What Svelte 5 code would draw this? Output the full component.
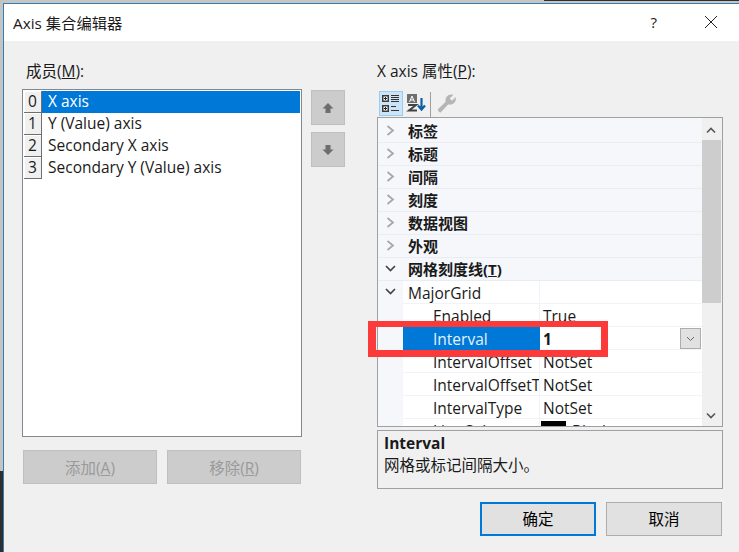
<script>
  const members = ['X axis', 'Y (Value) axis', 'Secondary X axis', 'Secondary Y (Value) axis'];
  const categories = ['标签', '标题', '间隔', '刻度', '数据视图', '外观'];
  const rows = [
    { name: 'Enabled', value: 'True' },
    { name: 'Interval', value: '1', selected: true },
    { name: 'IntervalOffset', value: 'NotSet' },
    { name: 'IntervalOffsetType', value: 'NotSet' },
    { name: 'IntervalType', value: 'NotSet' },
    { name: 'LineColor', value: 'Black', swatch: true }
  ];
</script>

<div class="screen">
  <div class="dialog">
    <header class="titlebar">
      <span class="title">Axis 集合编辑器</span>
      <span class="help">?</span>
      <svg class="close" width="14" height="14" viewBox="0 0 14 14"><path d="M1 1L13 13M13 1L1 13" stroke="#222" fill="none" /></svg>
    </header>

    <div class="body">
      <section class="left">
        <div class="label">成员(<u>M</u>):</div>
        <div class="list-row">
          <div class="list">
            {#each members as m, i}
              <div class="member">
                <span class="index">{i}</span>
                <span class="member-name" class:active={i === 0}>{m}</span>
              </div>
            {/each}
          </div>
          <div class="arrows">
            <button class="arrow" aria-label="up">
              <svg width="12" height="12" viewBox="0 0 12 12"><path d="M6 1L11.500 6.500H8.500V11H3.500V6.500H.5Z" fill="#6d6d6d" /></svg>
            </button>
            <button class="arrow" aria-label="down">
              <svg width="12" height="12" viewBox="0 0 12 12"><path d="M6 11L11.500 5.500H8.500V1H3.500V5.500H.5Z" fill="#6d6d6d" /></svg>
            </button>
          </div>
        </div>
        <div class="list-buttons">
          <button class="btn disabled">添加(<u>A</u>)</button>
          <button class="btn disabled">移除(<u>R</u>)</button>
        </div>
      </section>

      <section class="right">
        <div class="label">X axis 属性(<u>P</u>):</div>
        <div class="toolbar">
          <span class="tool on">
            <svg width="20" height="20" viewBox="0 0 20 20">
              <path d="M1 2h7v7H1zM1 12h7v7H1z" fill="#3c3c3c" />
              <path d="M2.500 3.500h4v4h-4zM2.500 13.500h4v4h-4z" fill="#fff" />
              <path d="M3 5.500h3M4.500 4v3M3 15.500h3M4.500 14v3" stroke="#222" fill="none" />
              <path d="M10 2.500h8M10 4.500h8M10 6.500h8M10 8.500h8M10 13.500h5M10 17.500h8" stroke="#333" stroke-width="1.200" fill="none" />
            </svg>
          </span>
          <span class="tool">
            <svg width="20" height="20" viewBox="0 0 20 20">
              <path d="M1 1h10v9H1z" fill="#6f6f6f" />
              <path d="M3.500 9L6 3L8.500 9M4.500 7h3" stroke="#fff" fill="none" />
              <path d="M2 12h8L3 17.500h8" stroke="#444" stroke-width="2" fill="none" />
              <path d="M15.500 5v11M12 12.500l3.500 4 3.500-4" stroke="#0e5fa8" stroke-width="2.200" fill="none" />
            </svg>
          </span>
          <span class="tool-sep"></span>
          <span class="tool">
            <svg width="20" height="20" viewBox="0 0 22 22">
              <path d="M1 18L9.500 9.500C8.500 5 12.500 0.500 18 2L14 6L16.500 8.500L20.500 4.500C22 10 17 14 12.500 12.500L4 21.500C3 22 .5 19.500 1 18Z" fill="#b5b5b5" />
            </svg>
          </span>
        </div>

        <div class="grid">
          <div class="grid-scroll">
            {#each categories as c}
              <div class="cat">
                <svg class="chev" width="9" height="11" viewBox="0 0 9 11"><path d="M1.500 1L7 5.500L1.500 10" stroke="#a6a6a6" stroke-width="1.700" fill="none" /></svg>
                <span class="cat-name">{c}</span>
              </div>
            {/each}
            <div class="cat">
              <svg class="chev open" width="11" height="9" viewBox="0 0 11 9"><path d="M1 2L5.500 6.500L10 2" stroke="#444" stroke-width="1.700" fill="none" /></svg>
              <span class="cat-name">网格刻度线(<u>T</u>)</span>
            </div>
            <div class="prop">
              <span class="gutter">
                <svg class="chev open" width="11" height="9" viewBox="0 0 11 9"><path d="M1 2L5.500 6.500L10 2" stroke="#444" stroke-width="1.700" fill="none" /></svg>
              </span>
              <span class="prop-name group">MajorGrid</span>
              <span class="prop-value"></span>
            </div>
            {#each rows as r}
              <div class="prop">
                <span class="gutter"></span>
                <span class="prop-name" class:selected={r.selected}>{r.name}</span>
                <span class="prop-value" class:bold={r.selected}>
                  {#if r.swatch}<i class="swatch"></i>{/if}{r.value}
                  {#if r.selected}
                    <span class="combo">
                      <svg width="9" height="6" viewBox="0 0 9 6"><path d="M1 1L4.500 4.500L8 1" stroke="#666" fill="none" /></svg>
                    </span>
                  {/if}
                </span>
              </div>
            {/each}
          </div>
          <div class="scrollbar">
            <svg class="sb-arrow" width="10" height="7" viewBox="0 0 10 7"><path d="M1 5.500L5 1.500L9 5.500" stroke="#555" stroke-width="1.600" fill="none" /></svg>
            <div class="sb-track"><div class="sb-thumb"></div></div>
            <svg class="sb-arrow" width="10" height="7" viewBox="0 0 10 7"><path d="M1 1.500L5 5.500L9 1.500" stroke="#555" stroke-width="1.600" fill="none" /></svg>
          </div>
          <div class="highlight"></div>
        </div>

        <div class="desc">
          <b>Interval</b>
          <span>网格或标记间隔大小。</span>
        </div>
      </section>
    </div>

    <footer class="footer">
      <button class="btn ok">确定</button>
      <button class="btn cancel">取消</button>
    </footer>
  </div>
</div>

<style>
  :global(body) {
    margin: 0;
    background: #c4c4c4;
  }

  .screen {
    width: 739px;
    height: 552px;
    padding: 3px 0 0 3px;
    box-sizing: border-box;
    overflow: hidden;
    background:
      linear-gradient(#2e2e2e, #2e2e2e) 0 471px / 3px 81px no-repeat,
      linear-gradient(#2e2e2e, #2e2e2e) 544px 0 / 195px 1px no-repeat,
      #c4c4c4;
    font-family: "Open Sans", "Noto Sans CJK SC", sans-serif;
    font-size: 15.500px;
    color: #1a1a1a;
  }

  .dialog {
    height: 549px;
    border: solid #2f7fb5;
    border-width: 1px 0 0 1px;
    background: #f0f0f0;
    display: flex;
    flex-direction: column;
    box-sizing: border-box;
  }

  .titlebar {
    height: 37px;
    flex: none;
    background: #fff;
    display: flex;
    align-items: center;
    padding-left: 9px;
  }

  .title {
    flex: 1;
    font-size: 15.300px;
    margin-top: -2px;
  }

  .help {
    margin-right: 47px;
    font-size: 15px;
    margin-top: -2px;
  }

  .close {
    margin-right: 21px;
    margin-top: -2px;
  }

  .body {
    flex: 1;
    display: flex;
    padding-top: 17px;
  }

  .left {
    width: 373px;
    padding-left: 18px;
    box-sizing: border-box;
    flex: none;
  }

  .label {
    height: 31px;
    line-height: 26px;
  }

  .left .label {
    padding-left: 4px;
  }

  .list-row {
    display: flex;
    gap: 9px;
  }

  .list {
    width: 280px;
    height: 348px;
    box-sizing: border-box;
    border: 1px solid #828790;
    background: #fff;
    padding: 1px;
  }

  .member {
    display: flex;
    height: 22px;
  }

  .index {
    width: 18px;
    flex: none;
    box-sizing: border-box;
    background: #f0f0f0;
    border: solid #6f6f6f;
    border-width: 0 1px 1px 0;
    box-shadow: inset 1px 1px 0 #fff;
    text-align: center;
    line-height: 20px;
  }

  .member-name {
    flex: 1;
    padding-left: 6px;
    line-height: 20px;
  }

  .member-name.active {
    background: #0078d7;
    color: #fff;
  }

  .arrows {
    display: flex;
    flex-direction: column;
    gap: 7px;
    margin-top: 1px;
  }

  .arrow {
    width: 34px;
    height: 35px;
    padding: 0;
    background: #ccc;
    border: 1px solid #bfbfbf;
    display: flex;
    align-items: center;
    justify-content: center;
  }

  .list-buttons {
    display: flex;
    gap: 10px;
    margin-top: 13px;
    padding-left: 1px;
  }

  .btn {
    font: inherit;
    padding: 0;
    width: 134px;
    height: 34px;
    box-sizing: border-box;
  }

  .btn.disabled {
    background: #ccc;
    border: 1px solid #bfbfbf;
    color: #9a9a9a;
  }

  .right {
    width: 345px;
    flex: none;
  }

  .toolbar {
    height: 28px;
    display: flex;
    align-items: center;
    gap: 1px;
    padding-left: 2px;
  }

  .tool {
    width: 24px;
    height: 25px;
    box-sizing: border-box;
    display: flex;
    align-items: center;
    justify-content: center;
  }

  .tool.on {
    background: #cce4f7;
    border: 1px solid #99ccee;
  }

  .tool-sep {
    width: 1px;
    height: 25px;
    background: #a0a0a0;
    margin: 2px 3px 0 1px;
  }

  .grid {
    position: relative;
    display: flex;
    width: 346px;
    height: 310px;
    box-sizing: border-box;
    border: 1px solid #a0a0a0;
    background: #fff;
  }

  .grid-scroll {
    flex: 1;
    height: 308px;
    overflow: hidden;
    padding-top: 2px;
    box-sizing: border-box;
    background: #f5f7fb;
  }

  .cat {
    height: 23px;
    box-sizing: border-box;
    background: #f5f7fb;
    border-bottom: 1px solid #e9edf3;
    display: flex;
    align-items: center;
    position: relative;
  }

  .cat-name {
    margin-left: 30px;
    margin-top: -2px;
    font-weight: 700;
    font-size: 15px;
  }

  .chev {
    position: absolute;
    left: 8px;
    top: 5px;
  }

  .chev.open {
    left: 7px;
    top: 6px;
  }

  .prop {
    height: 23px;
    display: flex;
    box-sizing: border-box;
    position: relative;
    background: #fff;
  }

  .gutter {
    width: 25px;
    flex: none;
    background: #f5f7fb;
  }

  .prop-name {
    width: 137px;
    flex: none;
    box-sizing: border-box;
    padding-left: 30px;
    line-height: 24px;
    border-bottom: 1px solid #f0f3f8;
    border-right: 1px solid #f0f3f8;
    white-space: nowrap;
    overflow: hidden;
  }

  .prop-name.group {
    padding-left: 5px;
  }

  .prop-name.selected {
    background: #0078d7;
    color: #e6f2fb;
    border-color: #0078d7;
  }

  .prop-value {
    flex: 1;
    padding-left: 3px;
    line-height: 24px;
    border-bottom: 1px solid #f0f3f8;
    position: relative;
  }

  .prop-value.bold {
    font-weight: 700;
  }

  .swatch {
    display: inline-block;
    width: 25px;
    height: 14px;
    background: #000;
    vertical-align: top;
    margin: 2px 6px 0 -2px;
  }

  .combo {
    position: absolute;
    right: 1px;
    top: 1px;
    width: 21px;
    height: 21px;
    box-sizing: border-box;
    background: #e1e1e1;
    border: 1px solid #adadad;
    display: flex;
    align-items: center;
    justify-content: center;
  }

  .scrollbar {
    width: 20px;
    flex: none;
    background: #f0f0f0;
    display: flex;
    flex-direction: column;
  }

  .sb-arrow {
    flex: none;
    margin: 9px 0 7px 4px;
  }

  .sb-track {
    flex: 1;
    margin: -1px 0;
  }

  .sb-thumb {
    width: 19px;
    height: 163px;
    background: #cdcdcd;
  }

  .highlight {
    position: absolute;
    left: -10px;
    top: 203px;
    width: 240px;
    height: 36px;
    box-sizing: border-box;
    border: solid #fc3a3a;
    border-width: 6px 7px 7px 8px;
    pointer-events: none;
  }

  .desc {
    width: 346px;
    height: 59px;
    margin-top: 3px;
    box-sizing: border-box;
    border: 1px solid #a0a0a0;
    padding: 1px 6px;
    display: flex;
    flex-direction: column;
    line-height: 22px;
  }

  .footer {
    display: flex;
    justify-content: flex-end;
    gap: 10px;
    padding: 0 17px 16px 0;
  }

  .btn.ok {
    width: 116px;
    height: 34px;
    padding-bottom: 2px;
    background: #e1e1e1;
    border: 2px solid #0078d7;
  }

  .btn.cancel {
    width: 116px;
    height: 34px;
    padding-bottom: 2px;
    background: #e1e1e1;
    border: 1px solid #adadad;
  }
</style>
